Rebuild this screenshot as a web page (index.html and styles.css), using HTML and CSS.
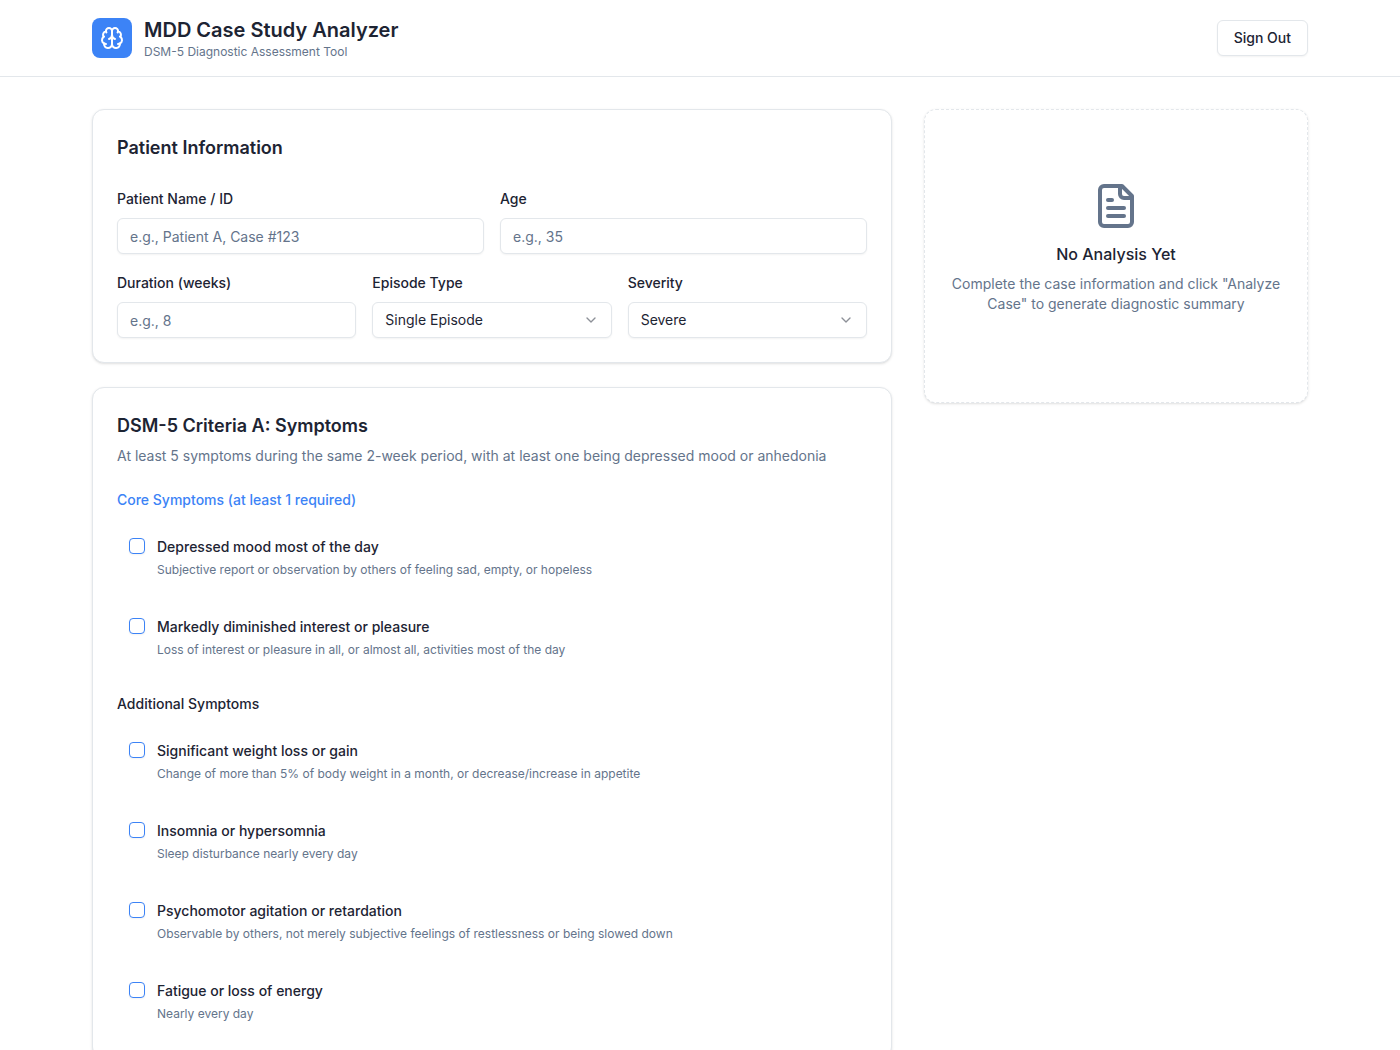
FILE: index.html
```html
<!DOCTYPE html>
<html lang="en">
<head>
  <meta charset="UTF-8">
  <meta name="viewport" content="width=device-width, initial-scale=1.0">
  <title>MDD Case Study Analyzer</title>
  <link rel="stylesheet" href="styles.css">
</head>
<body>
  <header class="site-header">
    <div class="container header-inner">
      <div class="brand">
        <div class="brand-icon">
          <svg width="24" height="24" viewBox="0 0 24 24" aria-hidden="true">
            <path d="M12 5a3 3 0 1 0-5.997.125 4 4 0 0 0-2.526 5.77 4 4 0 0 0 .556 6.588A4 4 0 1 0 12 18Z"/>
            <path d="M12 5a3 3 0 1 1 5.997.125 4 4 0 0 1 2.526 5.77 4 4 0 0 1-.556 6.588A4 4 0 1 1 12 18Z"/>
            <path d="M15 13a4.5 4.5 0 0 1-3-4 4.5 4.5 0 0 1-3 4"/>
            <path d="M17.599 6.5a3 3 0 0 0 .399-1.375"/>
            <path d="M6.003 5.125A3 3 0 0 0 6.401 6.5"/>
            <path d="M3.477 10.896a4 4 0 0 1 .585-.396"/>
            <path d="M19.938 10.5a4 4 0 0 1 .585.396"/>
            <path d="M6 18a4 4 0 0 1-1.967-.516"/>
            <path d="M19.967 17.484A4 4 0 0 1 18 18"/>
          </svg>
        </div>
        <div>
          <h1>MDD Case Study Analyzer</h1>
          <p class="tagline">DSM-5 Diagnostic Assessment Tool</p>
        </div>
      </div>
      <button type="button" class="sign-out">Sign Out</button>
    </div>
  </header>

  <main class="container layout">
    <form class="case-form">
      <section class="card">
        <div class="card-header">
          <h2>Patient Information</h2>
        </div>
        <div class="field-row">
          <div class="field">
            <label for="patient-name">Patient Name / ID</label>
            <input type="text" id="patient-name" placeholder="e.g., Patient A, Case #123">
          </div>
          <div class="field">
            <label for="age">Age</label>
            <input type="number" id="age" placeholder="e.g., 35">
          </div>
        </div>
        <div class="field-row">
          <div class="field">
            <label for="duration">Duration (weeks)</label>
            <input type="number" id="duration" placeholder="e.g., 8">
          </div>
          <div class="field">
            <label for="episode-type">Episode Type</label>
            <div class="select-wrap">
              <select id="episode-type">
                <option selected>Single Episode</option>
              </select>
              <svg class="chevron" width="16" height="16" viewBox="0 0 24 24" aria-hidden="true"><path d="m6 9 6 6 6-6"/></svg>
            </div>
          </div>
          <div class="field">
            <label for="severity">Severity</label>
            <div class="select-wrap">
              <select id="severity">
                <option selected>Severe</option>
              </select>
              <svg class="chevron" width="16" height="16" viewBox="0 0 24 24" aria-hidden="true"><path d="m6 9 6 6 6-6"/></svg>
            </div>
          </div>
        </div>
      </section>

      <section class="card">
        <div class="card-header">
          <h2>DSM-5 Criteria A: Symptoms</h2>
          <p>At least 5 symptoms during the same 2-week period, with at least one being depressed mood or anhedonia</p>
        </div>

        <div class="symptom-group">
          <h3 class="core">Core Symptoms (at least 1 required)</h3>
          <div class="symptom">
            <input type="checkbox" id="depressed-mood">
            <div>
              <label for="depressed-mood">Depressed mood most of the day</label>
              <p>Subjective report or observation by others of feeling sad, empty, or hopeless</p>
            </div>
          </div>
          <div class="symptom">
            <input type="checkbox" id="anhedonia">
            <div>
              <label for="anhedonia">Markedly diminished interest or pleasure</label>
              <p>Loss of interest or pleasure in all, or almost all, activities most of the day</p>
            </div>
          </div>
        </div>

        <div class="symptom-group">
          <h3>Additional Symptoms</h3>
          <div class="symptom">
            <input type="checkbox" id="weight-change">
            <div>
              <label for="weight-change">Significant weight loss or gain</label>
              <p>Change of more than 5% of body weight in a month, or decrease/increase in appetite</p>
            </div>
          </div>
          <div class="symptom">
            <input type="checkbox" id="sleep">
            <div>
              <label for="sleep">Insomnia or hypersomnia</label>
              <p>Sleep disturbance nearly every day</p>
            </div>
          </div>
          <div class="symptom">
            <input type="checkbox" id="psychomotor">
            <div>
              <label for="psychomotor">Psychomotor agitation or retardation</label>
              <p>Observable by others, not merely subjective feelings of restlessness or being slowed down</p>
            </div>
          </div>
          <div class="symptom">
            <input type="checkbox" id="fatigue">
            <div>
              <label for="fatigue">Fatigue or loss of energy</label>
              <p>Nearly every day</p>
            </div>
          </div>
        </div>
      </section>
    </form>

    <aside class="card empty-state">
      <svg width="48" height="48" viewBox="0 0 24 24" aria-hidden="true">
        <path d="M15 2H6a2 2 0 0 0-2 2v16a2 2 0 0 0 2 2h12a2 2 0 0 0 2-2V7Z"/>
        <path d="M14 2v4a2 2 0 0 0 2 2h4"/>
        <path d="M10 9H8"/>
        <path d="M16 13H8"/>
        <path d="M16 17H8"/>
      </svg>
      <h3>No Analysis Yet</h3>
      <p>Complete the case information and click "Analyze Case" to generate diagnostic summary</p>
    </aside>
  </main>
</body>
</html>
```
FILE: styles.css
```css
:root {
  --text: #1d2433;
  --muted: #64748b;
  --border: #e3e7eb;
  --primary: #3c83f6;
}

* {
  box-sizing: border-box;
}

body {
  margin: 0;
  font-family: Inter, "Liberation Sans", sans-serif;
  font-size: 16px;
  line-height: 24px;
  color: var(--text);
  background: #fff;
}

h1, h2, h3, p {
  margin: 0;
}

svg {
  fill: none;
  stroke: currentColor;
  stroke-width: 2;
  stroke-linecap: round;
  stroke-linejoin: round;
}

.container {
  max-width: 1280px;
  margin: 0 auto;
  padding: 0 32px;
}

/* header */
.site-header {
  background: #fff;
  border-bottom: 1px solid var(--border);
}

.header-inner {
  display: flex;
  align-items: center;
  justify-content: space-between;
  padding-top: 16px;
  padding-bottom: 16px;
}

.brand {
  display: flex;
  align-items: center;
  gap: 12px;
}

.brand-icon {
  display: flex;
  padding: 8px;
  border-radius: 8px;
  background: var(--primary);
  color: #fff;
}

h1 {
  font-size: 20px;
  line-height: 28px;
  font-weight: 600;
}

.tagline {
  font-size: 12px;
  line-height: 16px;
  color: var(--muted);
}

.sign-out {
  height: 36px;
  padding: 0 16px;
  border: 1px solid var(--border);
  border-radius: 6px;
  background: #fff;
  box-shadow: 0 1px 2px rgba(0, 0, 0, 0.05);
  color: var(--text);
  font-family: inherit;
  font-size: 14px;
  line-height: 20px;
  font-weight: 500;
  cursor: pointer;
}

/* page */
.layout {
  display: grid;
  grid-template-columns: repeat(3, minmax(0, 1fr));
  gap: 32px;
  align-items: start;
  padding-top: 32px;
  padding-bottom: 32px;
}

.case-form {
  grid-column: span 2;
  display: flex;
  flex-direction: column;
  gap: 24px;
}

.card {
  padding: 24px;
  border: 1px solid var(--border);
  border-radius: 12px;
  background: #fff;
  box-shadow: 0 1px 3px rgba(0, 0, 0, 0.1), 0 1px 2px -1px rgba(0, 0, 0, 0.1);
}

.card-header {
  display: flex;
  flex-direction: column;
  gap: 6px;
  margin-bottom: 24px;
}

h2 {
  font-size: 18px;
  line-height: 28px;
  font-weight: 600;
}

.card-header p {
  font-size: 14px;
  line-height: 20px;
  color: var(--muted);
}

/* form fields */
.field-row {
  display: flex;
  gap: 16px;
}

.field-row + .field-row {
  margin-top: 16px;
}

.field {
  flex: 1;
  min-width: 0;
}

label {
  font-size: 14px;
  line-height: 14px;
  font-weight: 500;
}

.field input,
.field select {
  display: block;
  width: 100%;
  height: 36px;
  margin: 0;
  padding: 0 12px;
  border: 1px solid var(--border);
  border-radius: 6px;
  background: #fff;
  box-shadow: 0 1px 2px rgba(0, 0, 0, 0.05);
  color: var(--text);
  font-family: inherit;
  font-size: 14px;
  line-height: 20px;
  appearance: none;
}

.field > input,
.select-wrap {
  margin-top: 8px;
}

.field > input {
  margin-top: 8px;
}

.field input::placeholder {
  color: var(--muted);
}

.select-wrap {
  position: relative;
}

.chevron {
  position: absolute;
  top: 10px;
  right: 13px;
  opacity: 0.5;
  pointer-events: none;
}

/* symptoms */
.symptom-group {
  display: flex;
  flex-direction: column;
  gap: 12px;
}

.symptom-group + .symptom-group {
  margin-top: 24px;
}

.symptom-group h3 {
  font-size: 14px;
  line-height: 20px;
  font-weight: 500;
}

.symptom-group .core {
  color: var(--primary);
}

.symptom {
  display: flex;
  align-items: flex-start;
  gap: 12px;
  padding: 12px;
  border-radius: 8px;
}

.symptom input {
  flex: none;
  width: 16px;
  height: 16px;
  margin: 4px 0 0;
  border: 1px solid var(--primary);
  border-radius: 4px;
  background: #fff;
  box-shadow: 0 1px 2px rgba(0, 0, 0, 0.05);
  appearance: none;
}

.symptom input:checked {
  background: var(--primary);
}

.symptom p {
  margin-top: 4px;
  font-size: 12px;
  line-height: 16px;
  color: var(--muted);
}

/* empty result panel */
.empty-state {
  display: flex;
  flex-direction: column;
  align-items: center;
  padding: 72px 24px 88px;
  border-style: dashed;
  text-align: center;
}

.empty-state svg {
  color: var(--muted);
}

.empty-state h3 {
  margin: 12px 0 8px;
  font-size: 16px;
  font-weight: 500;
}

.empty-state p {
  font-size: 14px;
  line-height: 20px;
  color: var(--muted);
}

@media (max-width: 1023px) {
  .layout {
    grid-template-columns: minmax(0, 1fr);
  }

  .case-form {
    grid-column: auto;
  }
}
```
